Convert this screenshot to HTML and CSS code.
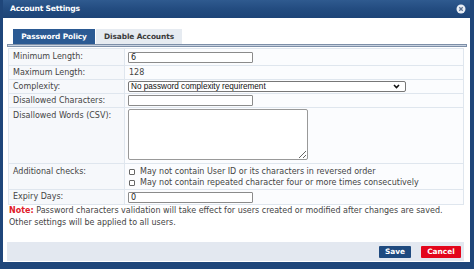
FILE: index.html
```html
<!DOCTYPE html>
<html>
<head>
<meta charset="utf-8">
<link rel="stylesheet" href="styles.css">
</head>
<body>
<div class="window">
  <div class="titlebar">
    <span class="title">Account Settings</span>
    <svg class="close" width="10" height="10" viewBox="0 0 10 10"><circle cx="5" cy="5" r="4.5" fill="#e9eef5"/><path d="M3.3 3.3 L6.7 6.7 M6.7 3.3 L3.3 6.7" stroke="#5a7090" stroke-width="1.3"/></svg>
  </div>
  <div class="content">
    <div class="tabs">
      <div class="tab active">Password Policy</div>
      <div class="tab">Disable Accounts</div>
    </div>
    <div class="tabbar"></div>
    <div class="form">
      <div class="row r1"><div class="lbl">Minimum Length:</div><div class="val"><input class="inp" type="text" value="6"></div></div>
      <div class="row r2"><div class="lbl">Maximum Length:</div><div class="val"><span class="txt">128</span></div></div>
      <div class="row r3"><div class="lbl">Complexity:</div><div class="val"><div class="selwrap"><select class="sel"><option>No password complexity requirement</option></select><svg class="chev" width="7" height="5" viewBox="0 0 7 5"><path d="M1 1 L3.5 3.5 L6 1" fill="none" stroke="#111" stroke-width="1.6"/></svg></div></div></div>
      <div class="row r4"><div class="lbl">Disallowed Characters:</div><div class="val"><input class="inp" type="text" value=""></div></div>
      <div class="row r5"><div class="lbl">Disallowed Words (CSV):</div><div class="val"><textarea class="area"></textarea></div></div>
      <div class="row r6"><div class="lbl">Additional checks:</div><div class="val checks">
        <label class="chk"><span class="box"></span>May not contain User ID or its characters in reversed order</label>
        <label class="chk"><span class="box"></span>May not contain repeated character four or more times consecutively</label>
      </div></div>
      <div class="row r7"><div class="lbl">Expiry Days:</div><div class="val"><input class="inp" type="text" value="0"></div></div>
    </div>
    <div class="note"><span class="red">Note:</span> Password characters validation will take effect for users created or modified after changes are saved.<br>Other settings will be applied to all users.</div>
    <div class="footer">
      <button class="btn save">Save</button>
      <button class="btn cancel">Cancel</button>
    </div>
  </div>
</div>
</body>
</html>
```
FILE: styles.css
```css
html, body {
  margin: 0;
  padding: 0;
  width: 474px;
  height: 269px;
  overflow: hidden;
  font-family: "DejaVu Sans", Verdana, sans-serif;
  font-size: 8px;
  color: #333;
}
.window {
  width: 474px;
  height: 269px;
  box-sizing: border-box;
  background: #1f467a;
  padding: 0 4px 7px 3px;
  display: flex;
  flex-direction: column;
}
.titlebar {
  height: 17px;
  flex: none;
  display: flex;
  align-items: center;
  justify-content: space-between;
  padding: 0 4px 1px 7px;
  background: linear-gradient(#2f5a8f, #234c80 50%, #1d4477);
}
.title {
  color: #fff;
  font-weight: bold;
  font-size: 7.6px;
  letter-spacing: -0.2px;
}
.close { display: block; }
.content {
  flex: 1;
  background: #fff;
  display: flex;
  flex-direction: column;
  padding-top: 11px;
}
.tabs {
  display: flex;
  height: 15px;
  padding-left: 10px;
  gap: 1px;
}
.tab {
  display: flex;
  align-items: center;
  justify-content: center;
  font-weight: bold;
  font-size: 7.4px;
  letter-spacing: -0.1px;
  color: #3a3a3a;
  background: #e6ebf1;
  width: 86px;
}
.tab.active {
  width: 82px;
  background: #2b5a93;
  color: #fff;
}
.tabbar {
  height: 3px;
  box-sizing: border-box;
  margin: 0 3px 0 4px;
  border: 1px solid #7d8fa8;
  background: #c9d3e1;
}
.form {
  margin: 1px 6px 0 5px;
  border: 1px solid #dfe6ee;
  border-bottom: none;
}
.row {
  display: flex;
  border-bottom: 1px solid #dfe6ee;
  background: #f6f8fb;
}
.lbl {
  width: 111px;
  flex: none;
  padding: 0 0 0 4px;
  border-right: 1px solid #dfe6ee;
  display: flex;
  align-items: center;
  line-height: 10px;
  color: #444;
}
.val {
  flex: 1;
  display: flex;
  align-items: center;
  padding-left: 3px;
  background: #fbfcfe;
}
.r1 { height: 16px; }
.r2 { height: 13px; }
.r3 { height: 13px; }
.r4 { height: 13px; }
.r5 { height: 55px; }
.r5 .lbl { align-items: flex-start; padding-top: 3px; }
.r5 .val { align-items: flex-start; padding-top: 1px; }
.r6 { height: 25px; }
.r6 .lbl { align-items: flex-start; padding-top: 3px; }
.r7 { height: 14px; }
.inp {
  width: 125px;
  height: 11px;
  box-sizing: border-box;
  border: 1px solid #8b8b8b;
  border-radius: 1px;
  padding: 0 2px;
  font: inherit;
  color: #222;
  background: #fff;
}
.txt { padding-left: 1px; color: #444; }
.selwrap {
  position: relative;
  width: 278px;
  height: 11px;
}
.sel {
  appearance: none;
  -webkit-appearance: none;
  width: 278px;
  height: 11px;
  box-sizing: border-box;
  border: 1px solid #777;
  border-radius: 2px;
  padding: 0 2px;
  font-family: "Liberation Sans", Arial, sans-serif;
  font-size: 8.2px;
  line-height: 9px;
  color: #111;
  background: #fff;
}
.chev {
  position: absolute;
  right: 6px;
  top: 3px;
}
.area {
  width: 180px;
  height: 51px;
  box-sizing: border-box;
  border: 1px solid #999;
  border-radius: 2px;
  margin: 0;
  resize: both;
  font: inherit;
  background: #fff;
}
.checks {
  flex-direction: column;
  align-items: flex-start;
  justify-content: flex-start;
  gap: 3px;
  padding-top: 4px;
  padding-left: 4px;
}
.chk {
  display: flex;
  align-items: center;
  gap: 5px;
  color: #444;
  line-height: 8px;
}
.box {
  width: 4px;
  height: 4px;
  border: 1px solid #666;
  border-radius: 1px;
  background: #fff;
}
.note {
  margin: 0 0 0 6px;
  line-height: 12px;
  color: #444;
}
.red { color: #e0202a; font-weight: bold; }
.footer {
  margin: auto 6px 1px 4px;
  height: 19px;
  background: #e3e8f0;
  display: flex;
  align-items: center;
  justify-content: flex-end;
  gap: 10px;
  padding-right: 3px;
}
.btn {
  height: 12px;
  border: none;
  padding: 0;
  font-family: "DejaVu Sans", Verdana, sans-serif;
  font-weight: bold;
  font-size: 7.4px;
  color: #fff;
  border-radius: 1px;
}
.save { width: 32px; background: #1f4a7f; }
.cancel { width: 40px; background: #e3061c; }
```
